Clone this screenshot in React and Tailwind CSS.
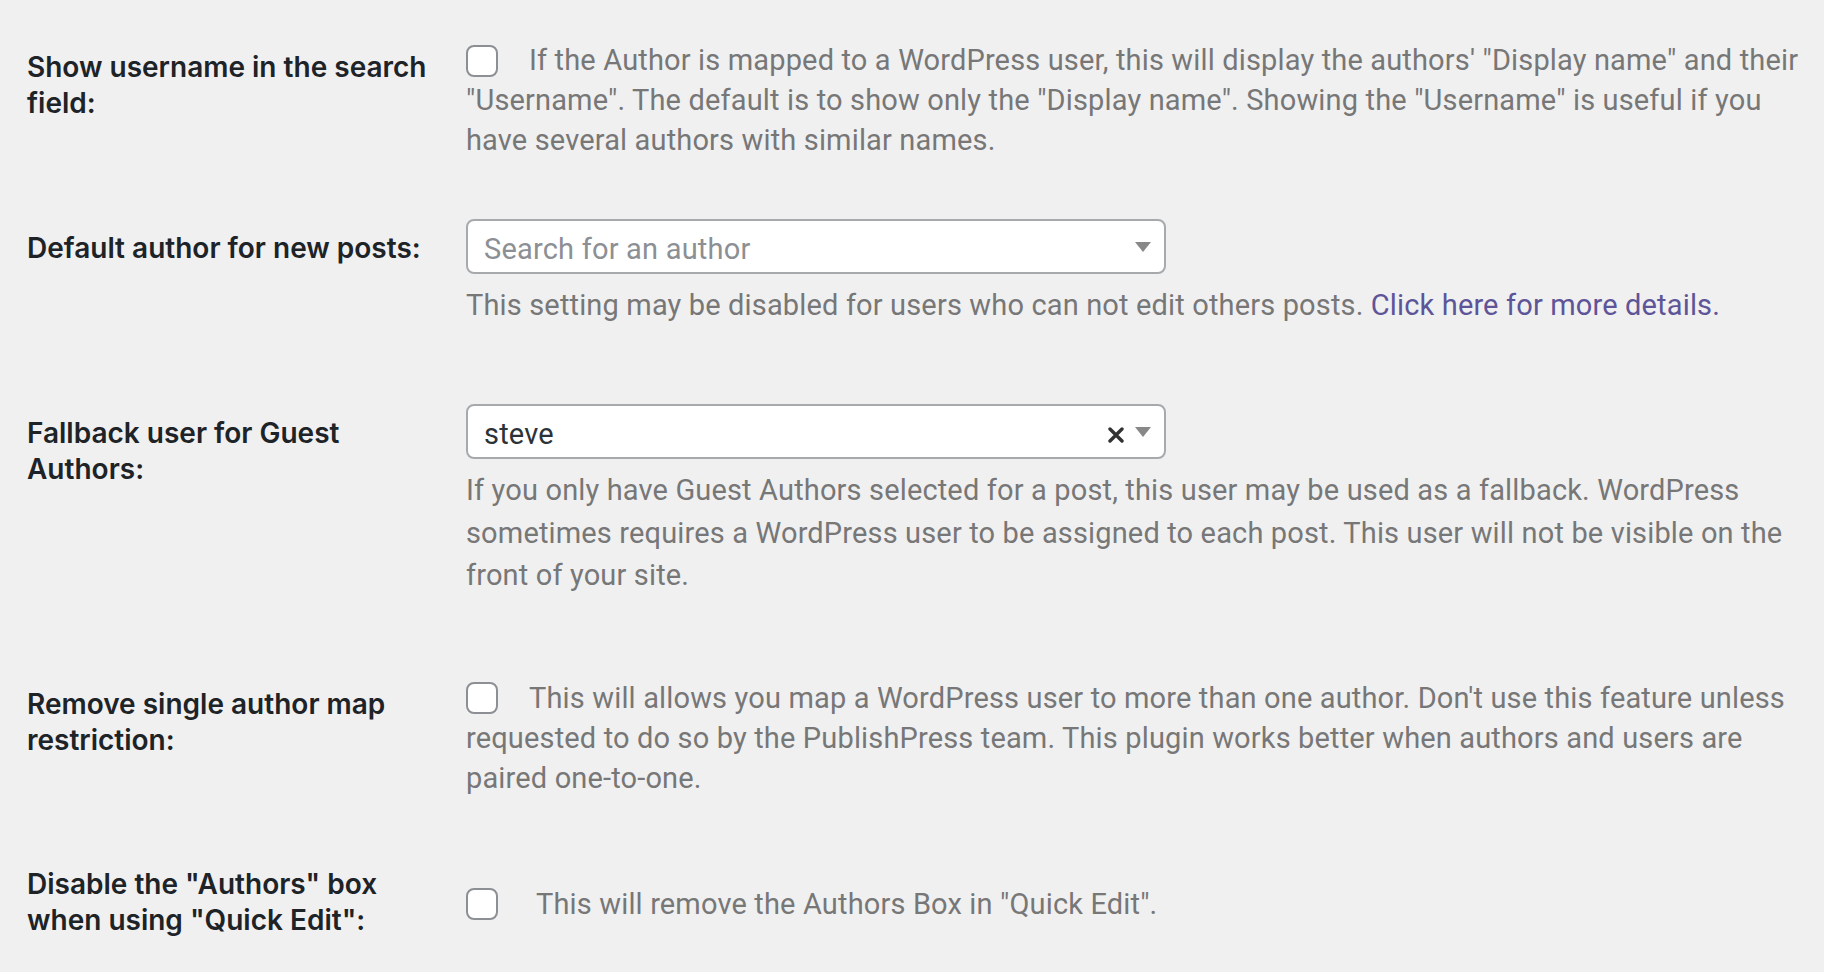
import React from "react";

const labelCls =
  "w-[439px] shrink-0 text-[28px] leading-[36px] font-semibold text-[#1d2327] [font-family:Inter,'Noto_Sans',sans-serif]";
const descCls =
  "text-[29px] tracking-[0.15px] text-[#777777] whitespace-nowrap [font-family:Roboto,'Liberation_Sans',sans-serif]";

function Checkbox({ mr }) {
  return (
    <span
      className={`inline-block align-middle w-[32px] h-[32px] rounded-[8px] border-2 border-[#8c8f94] bg-white mb-[3px] ${mr}`}
    />
  );
}

function Caret() {
  return (
    <svg width="16" height="10" viewBox="0 0 16 10" className="shrink-0">
      <path d="M0 0 L16 0 L8 10 Z" fill="#888888" />
    </svg>
  );
}

function Select({ value, placeholder, clearable }) {
  return (
    <div className="w-[700px] h-[55px] rounded-[8px] border-2 border-[#a7aaad] bg-white flex items-center pl-[16px] pr-[13px]">
      <span
        className={`flex-1 pt-[6px] text-[29px] tracking-[0.2px] [font-family:Roboto,'Liberation_Sans',sans-serif] ${
          value ? "text-[#2c3338]" : "text-[#8c8f94]"
        }`}
      >
        {value || placeholder}
      </span>
      {clearable && (
        <svg width="16" height="16" viewBox="0 0 16 16" className="mr-[11px] mt-[6px]">
          <path d="M2 2 L14 14 M14 2 L2 14" stroke="#333333" strokeWidth="3.4" strokeLinecap="round" />
        </svg>
      )}
      <Caret />
    </div>
  );
}

export default function App() {
  return (
    <div className="min-h-[972px] w-full bg-[#f0f0f1] pl-[27px] overflow-hidden">
      {/* Row 1 */}
      <div className="flex items-start">
        <div className={`${labelCls} pt-[49px]`}>
          Show username in the search
          <br />
          field:
        </div>
        <div className={`${descCls} leading-[40px] pt-[40px]`}>
          <Checkbox mr="mr-[31px]" />
          If the Author is mapped to a WordPress user, this will display the authors' "Display name" and their
          <br />
          "Username". The default is to show only the "Display name". Showing the "Username" is useful if you
          <br />
          have several authors with similar names.
        </div>
      </div>

      {/* Row 2 */}
      <div className="flex items-start">
        <div className={`${labelCls} pt-[70px]`}>Default author for new posts:</div>
        <div className="pt-[59px]">
          <Select placeholder="Search for an author" />
          <div className={`${descCls} leading-[40px] mt-[11px]`}>
            This setting may be disabled for users who can not edit others posts.{" "}
            <a href="#" className="text-[#5d5598]">
              Click here for more details.
            </a>
          </div>
        </div>
      </div>

      {/* Row 3 */}
      <div className="flex items-start">
        <div className={`${labelCls} pt-[90px]`}>
          Fallback user for Guest
          <br />
          Authors:
        </div>
        <div className="pt-[79px]">
          <Select value="steve" clearable />
          <div className={`${descCls} leading-[42.5px] mt-[10px]`}>
            If you only have Guest Authors selected for a post, this user may be used as a fallback. WordPress
            <br />
            sometimes requires a WordPress user to be assigned to each post. This user will not be visible on the
            <br />
            front of your site.
          </div>
        </div>
      </div>

      {/* Row 4 */}
      <div className="flex items-start">
        <div className={`${labelCls} pt-[89px]`}>
          Remove single author map
          <br />
          restriction:
        </div>
        <div className={`${descCls} leading-[40px] pt-[81px]`}>
          <Checkbox mr="mr-[31px]" />
          This will allows you map a WordPress user to more than one author. Don't use this feature unless
          <br />
          requested to do so by the PublishPress team. This plugin works better when authors and users are
          <br />
          paired one-to-one.
        </div>
      </div>

      {/* Row 5 */}
      <div className="flex items-start">
        <div className={`${labelCls} pt-[68px]`}>
          Disable the "Authors" box
          <br />
          when using "Quick Edit":
        </div>
        <div className={`${descCls} leading-[40px] pt-[86px]`}>
          <Checkbox mr="mr-[38px]" />
          This will remove the Authors Box in "Quick Edit".
        </div>
      </div>
    </div>
  );
}
